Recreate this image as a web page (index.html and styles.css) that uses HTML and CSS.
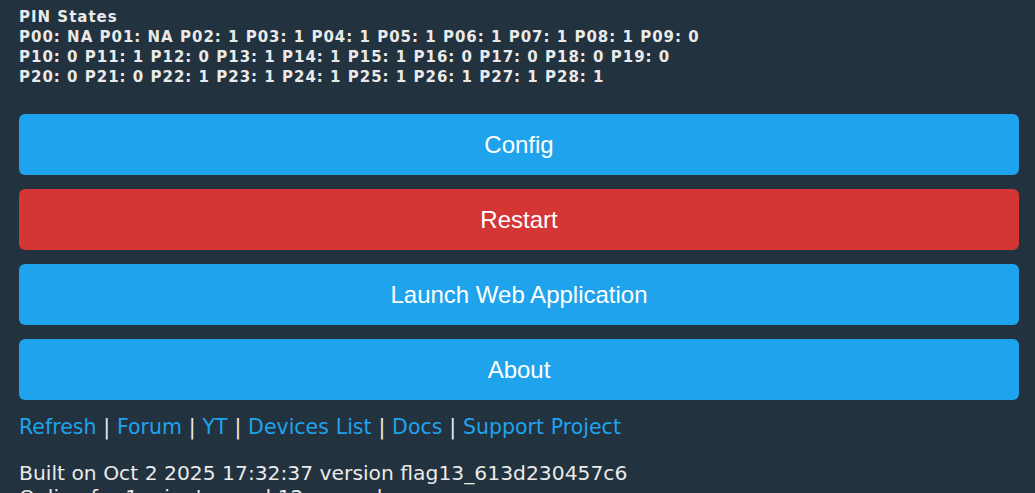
FILE: index.html
```html
<!DOCTYPE html>
<html>
<head>
<meta charset="utf-8">
<link rel="stylesheet" href="styles.css">
</head>
<body>
<div class="page">
  <div class="pins">
    <div>PIN States</div>
    <div>P00: NA P01: NA P02: 1 P03: 1 P04: 1 P05: 1 P06: 1 P07: 1 P08: 1 P09: 0</div>
    <div>P10: 0 P11: 1 P12: 0 P13: 1 P14: 1 P15: 1 P16: 0 P17: 0 P18: 0 P19: 0</div>
    <div>P20: 0 P21: 0 P22: 1 P23: 1 P24: 1 P25: 1 P26: 1 P27: 1 P28: 1</div>
  </div>
  <div class="buttons">
    <button class="btn">Config</button>
    <button class="btn red">Restart</button>
    <button class="btn">Launch Web Application</button>
    <button class="btn">About</button>
  </div>
  <div class="links">
    <a href="#">Refresh</a> | <a href="#">Forum</a> | <a href="#">YT</a> | <a href="#">Devices List</a> | <a href="#">Docs</a> | <a href="#">Support Project</a>
  </div>
  <div class="info">
    <div>Built on Oct 2 2025 17:32:37 version flag13_613d230457c6</div>
    <div>Online for 1 minutes and 12 seconds</div>
  </div>
</div>
</body>
</html>
```
FILE: styles.css
```css
html, body {
  margin: 0;
  padding: 0;
  background: #22323f;
  color: #eaeaea;
  font-family: "DejaVu Sans", Verdana, sans-serif;
}
.page {
  padding: 7px 16px 0 19px;
}
.pins {
  font-weight: bold;
  font-size: 15px;
  line-height: 20px;
  letter-spacing: 1px;
}
.buttons {
  margin-top: 27px;
  display: flex;
  flex-direction: column;
  gap: 14px;
}
.btn {
  height: 61px;
  border: 0;
  border-radius: 6px;
  background: #1fa3ec;
  color: #fff;
  font-family: "Liberation Sans", Arial, sans-serif;
  font-size: 24px;
  width: 1000px;
  padding: 0;
}
.btn.red {
  background: #d43535;
}
.links {
  margin-top: 14px;
  font-size: 20.5px;
  line-height: 26px;
  word-spacing: 0.3px;
}
.links a {
  color: #1fa3ec;
  text-decoration: none;
}
.info {
  margin-top: 21px;
  font-size: 20.3px;
  line-height: 24px;
}
```
